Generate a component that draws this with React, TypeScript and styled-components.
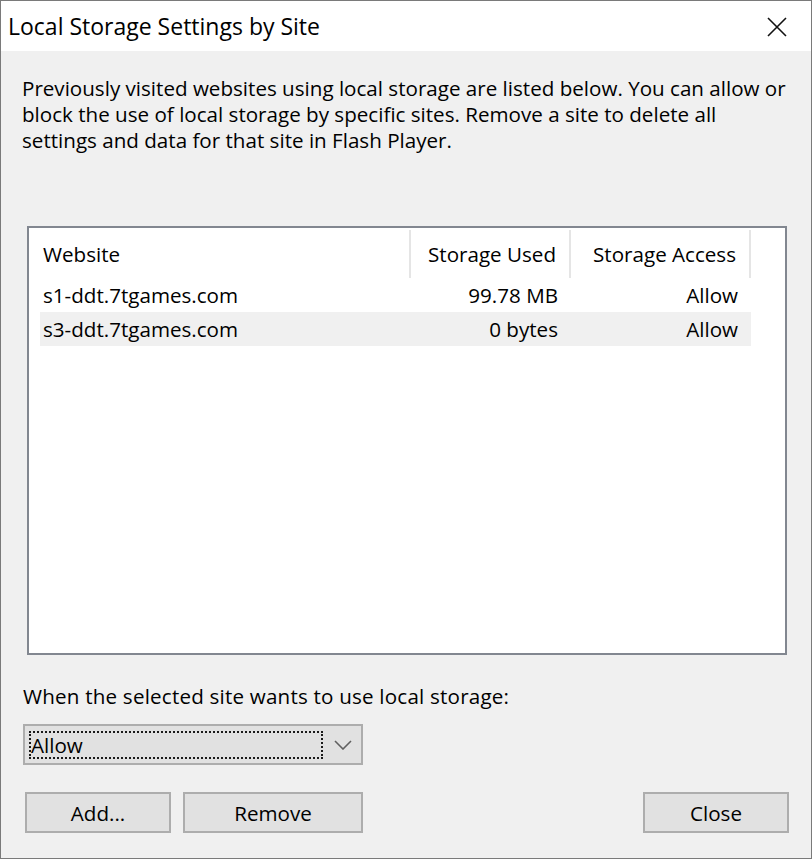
import React from "react";
import styled, { createGlobalStyle } from "styled-components";

const colors = {
  frame: "#7a7a7a",
  face: "#f0f0f0",
  control: "#e1e1e1",
  controlBorder: "#adadad",
  listBorder: "#828790",
  divider: "#e5e5e5",
  text: "#000000",
};

const uiFont = `"Open Sans", "Noto Sans", sans-serif`;

const GlobalStyle = createGlobalStyle`
  body {
    margin: 0;
    background: #ffffff;
  }
  * {
    box-sizing: border-box;
  }
`;

const Window = styled.div`
  width: 812px;
  height: 859px;
  border: 1px solid ${colors.frame};
  background: ${colors.face};
  color: ${colors.text};
  display: flex;
  flex-direction: column;
  font-family: ${uiFont};
  font-size: 20.6px;
  line-height: 26px;
`;

const TitleBar = styled.div`
  height: 50px;
  background: #ffffff;
  display: flex;
  align-items: center;
  justify-content: space-between;
  padding-left: 7px;
`;

const Title = styled.div`
  font-size: 23px;
  line-height: 30px;
`;

const CloseGlyph = styled.button`
  width: 68px;
  height: 50px;
  border: none;
  background: transparent;
  display: flex;
  align-items: center;
  justify-content: center;
  padding: 0;
  margin-top: 2px;
`;

const Content = styled.div`
  flex: 1;
  display: flex;
  flex-direction: column;
  padding: 24px 22px 0 21px;
`;

const Intro = styled.p`
  margin: 0;
  width: 770px;
`;

const ListBox = styled.div`
  margin: 73px 0 0 5px;
  width: 760px;
  height: 429px;
  border: 2px solid ${colors.listBorder};
  background: #ffffff;
`;

const HeaderRow = styled.div`
  display: grid;
  grid-template-columns: 382px 160px 180px;
  height: 50px;
`;

const HeaderCell = styled.div<{ $align?: "left" | "right" }>`
  display: flex;
  align-items: center;
  justify-content: ${(p) => (p.$align === "right" ? "flex-end" : "flex-start")};
  padding: ${(p) => (p.$align === "right" ? "0 13px 0 0" : "0 0 0 14px")};
  margin-top: 2px;
  border-right: 2px solid ${colors.divider};
  white-space: nowrap;
`;

const Rows = styled.div`
  margin-left: 11px;
  width: 711px;
`;

const SiteRow = styled.div<{ $hot?: boolean }>`
  display: grid;
  grid-template-columns: 371px 160px 180px;
  height: 34px;
  align-items: center;
  background: ${(p) => (p.$hot ? colors.face : "transparent")};
`;

const SiteCell = styled.div<{ $align?: "left" | "right" }>`
  text-align: ${(p) => p.$align ?? "left"};
  padding: ${(p) => (p.$align === "right" ? "0 13px 0 0" : "0 0 0 3px")};
  white-space: nowrap;
`;

const Label = styled.div`
  margin-top: 28px;
  padding-left: 1px;
  letter-spacing: 0.2px;
`;

const Select = styled.div`
  margin: 15px 0 0 1px;
  width: 340px;
  height: 41px;
  border: 2px solid ${colors.controlBorder};
  background: ${colors.control};
  display: flex;
  align-items: center;
  padding: 0 9px 0 4px;
`;

const FocusBox = styled.div`
  width: 294px;
  height: 28px;
  border: 2px dotted #1a1a1a;
  display: flex;
  align-items: center;
`;

const Chevron = styled.svg`
  margin-left: auto;
`;

const ButtonRow = styled.div`
  margin-top: 27px;
  display: flex;
  gap: 12px;
  padding-left: 3px;
`;

const DialogButton = styled.button<{ $wide?: boolean; $pushRight?: boolean }>`
  width: ${(p) => (p.$wide ? "180px" : "146px")};
  height: 41px;
  border: 2px solid ${colors.controlBorder};
  background: ${colors.control};
  font-family: ${uiFont};
  font-size: 20.6px;
  color: ${colors.text};
  padding: 0;
  margin-left: ${(p) => (p.$pushRight ? "auto" : "0")};
`;

const sites = [
  { name: "s1-ddt.7tgames.com", used: "99.78 MB", access: "Allow" },
  { name: "s3-ddt.7tgames.com", used: "0 bytes", access: "Allow" },
];

export default function App() {
  return (
    <>
      <GlobalStyle />
      <Window>
        <TitleBar>
          <Title>Local Storage Settings by Site</Title>
          <CloseGlyph aria-label="Close">
            <svg width="20" height="20" viewBox="0 0 20 20">
              <path d="M1 1 L19 19 M19 1 L1 19" stroke="#111" strokeWidth="1.6" fill="none" />
            </svg>
          </CloseGlyph>
        </TitleBar>
        <Content>
          <Intro>
            Previously visited websites using local storage are listed below. You can allow or block the use of local
            storage by specific sites. Remove a site to delete all settings and data for that site in Flash Player.
          </Intro>
          <ListBox>
            <HeaderRow>
              <HeaderCell>Website</HeaderCell>
              <HeaderCell $align="right">Storage Used</HeaderCell>
              <HeaderCell $align="right">Storage Access</HeaderCell>
            </HeaderRow>
            <Rows>
              {sites.map((s, i) => (
                <SiteRow key={s.name} $hot={i === 1}>
                  <SiteCell>{s.name}</SiteCell>
                  <SiteCell $align="right">{s.used}</SiteCell>
                  <SiteCell $align="right">{s.access}</SiteCell>
                </SiteRow>
              ))}
            </Rows>
          </ListBox>
          <Label>When the selected site wants to use local storage:</Label>
          <Select>
            <FocusBox>Allow</FocusBox>
            <Chevron width="18" height="10" viewBox="0 0 18 10">
              <path d="M1 1 L9 9 L17 1" stroke="#606060" strokeWidth="1.6" fill="none" />
            </Chevron>
          </Select>
          <ButtonRow>
            <DialogButton>Add...</DialogButton>
            <DialogButton $wide>Remove</DialogButton>
            <DialogButton $pushRight>Close</DialogButton>
          </ButtonRow>
        </Content>
      </Window>
    </>
  );
}
